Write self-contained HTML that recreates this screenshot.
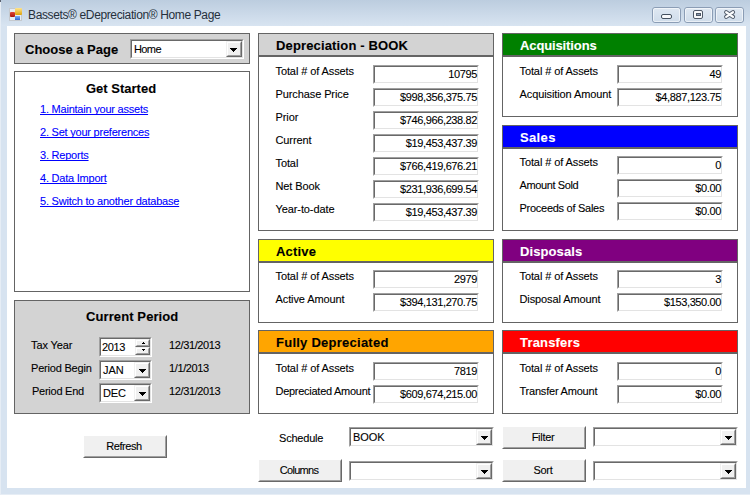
<!DOCTYPE html>
<html><head><meta charset="utf-8"><style>
*{margin:0;padding:0;box-sizing:border-box}
html,body{width:750px;height:495px;overflow:hidden;background:#d7e3f0}
body{position:relative;font-family:"Liberation Sans",sans-serif;font-size:11px;color:#000}
.a{position:absolute}
.t{position:absolute;white-space:nowrap;font-size:11px;line-height:13px;letter-spacing:-0.1px;-webkit-text-stroke:0.1px currentColor}
.n{letter-spacing:-0.38px}
.b{font-weight:bold;font-size:13px;line-height:15px;letter-spacing:0}
.p{position:absolute;border:1px solid #646464}
.sk{position:absolute;border:1px solid;border-color:#a0a0a0 #fff #fff #a0a0a0}
.sk>i{position:absolute;left:0;top:0;right:0;bottom:0;border:1px solid;border-color:#696969 #e3e3e3 #e3e3e3 #696969;background:#fff}
.btn{position:absolute;border:1px solid;border-color:#fff #696969 #696969 #fff;background:#f0f0f0}
.btn>i{position:absolute;left:0;top:0;right:0;bottom:0;border:1px solid;border-color:#f0f0f0 #a0a0a0 #a0a0a0 #f0f0f0}
.dd{position:absolute;border:1px solid;border-color:#f0f0f0 #696969 #696969 #f0f0f0;background:#f0f0f0}
.dd>i{position:absolute;left:0;top:0;right:0;bottom:0;border:1px solid;border-color:#fff #a0a0a0 #a0a0a0 #fff}
svg{position:absolute;shape-rendering:crispEdges}
.lnk{color:#0000ff;text-decoration:underline;text-decoration-skip-ink:none;letter-spacing:-0.22px}
.wb{position:absolute;top:7px;width:29px;height:16px;border:1px solid #8b9db5;border-radius:3px;background:linear-gradient(#dfe8f2,#cfdcea)}
.wb>i{position:absolute;left:0;top:0;right:0;bottom:0;border:1px solid rgba(255,255,255,0.55);border-radius:2px}
</style></head>
<body>
<div class="a" style="left:0;top:0;width:750px;height:26px;background:linear-gradient(#bccddf,#d8e4f1)"></div>
<div class="a" style="left:0;top:0;width:1px;height:495px;background:#e6edf5"></div>
<div class="a" style="left:0;top:494px;width:750px;height:1px;background:#e6edf5"></div>
<div class="a" style="left:0;top:0;width:1px;height:2px;background:#5a6270"></div>
<div class="a" style="left:7px;top:26px;width:739px;height:462px;background:#fff"></div>
<div class="a" style="left:9px;top:8px;width:13px;height:13px;border:1px solid #c5c9ce;background:#e6edf4"></div>
<div class="a" style="left:10px;top:12px;width:5px;height:5px;background:linear-gradient(#e0483a,#a8140c);border-radius:1px"></div>
<div class="a" style="left:15px;top:8px;width:7px;height:7px;background:linear-gradient(#ffe690,#dea20a);border-radius:1px"></div>
<div class="a" style="left:15px;top:16px;width:5px;height:4px;background:linear-gradient(#7fb0f5,#2f68d8)"></div>
<div class="t" style="left:28px;top:8px;font-size:12px;line-height:14px;color:#26303c;letter-spacing:-0.37px;-webkit-text-stroke:0">Bassets® eDepreciation® Home Page</div>
<div class="wb" style="left:652px"><i></i></div>
<div class="wb" style="left:684px"><i></i></div>
<div class="wb" style="left:715px"><i></i></div>
<div class="a" style="left:661px;top:14px;width:11px;height:5px;border:1px solid #44505f;background:#f8f9fb;border-radius:2px"></div>
<div class="a" style="left:693px;top:10px;width:10px;height:9px;border:1px solid #4f5968;background:#f8f9fb;border-radius:2px"></div>
<div class="a" style="left:696px;top:13px;width:5px;height:3px;border:1px solid #4f5968;background:#8a9ab0"></div>
<svg width="16" height="14" style="left:722px;top:8px;shape-rendering:auto"><path d="M4.20 4.25L11.00 8.85M11.00 4.25L4.20 8.85" stroke="#4f5968" stroke-width="4.2" stroke-linecap="round"/><path d="M4.20 4.25L11.00 8.85M11.00 4.25L4.20 8.85" stroke="#fbfcfd" stroke-width="2.3" stroke-linecap="round"/></svg>
<div class="p" style="left:14px;top:33px;width:236px;height:31px;background:#d3d3d3"></div>
<div class="t b" style="left:25px;top:42px;">Choose a Page</div>
<div class="sk" style="left:130px;top:39px;width:114px;height:20px"><i></i><div class="t" style="left:3px;top:3px"><span style='letter-spacing:-0.6px'>Home</span></div><div class="dd" style="left:95px;top:1px;width:16px;height:16px"><i></i><svg width="7" height="4" style="left:3px;top:6px"><path d="M0 0H7V1H6V2H5V3H4V4H3V3H2V2H1V1H0Z" fill="#000"/></svg></div></div>
<div class="p" style="left:14px;top:71px;width:236px;height:221px;background:#fff"></div>
<div class="t b" style="left:86px;top:81px;">Get Started</div>
<div class="t lnk" style="left:40px;top:103px;">1. Maintain your assets</div>
<div class="t lnk" style="left:40px;top:126px;">2. Set your preferences</div>
<div class="t lnk" style="left:40px;top:149px;">3. Reports</div>
<div class="t lnk" style="left:40px;top:172px;">4. Data Import</div>
<div class="t lnk" style="left:40px;top:195px;">5. Switch to another database</div>
<div class="p" style="left:14px;top:300px;width:236px;height:114px;background:#d3d3d3"></div>
<div class="t b" style="left:86px;top:309px;letter-spacing:0.1px">Current Period</div>
<div class="t" style="left:31px;top:339px;">Tax Year</div>
<div class="t" style="left:31px;top:362px;letter-spacing:-0.2px">Period Begin</div>
<div class="t" style="left:32px;top:385px;letter-spacing:-0.25px">Period End</div>
<div class="sk" style="left:99px;top:337px;width:53px;height:20px"><i></i><div class="t n" style="left:2px;top:3px">2013</div><div class="dd" style="left:35px;top:1px;width:15px;height:8px"><i></i><svg width="3" height="2" style="left:6px;top:2px"><path d="M1 0H2V1H3V2H0V1H1Z" fill="#000"/></svg></div><div class="dd" style="left:35px;top:9px;width:15px;height:8px"><i></i><svg width="3" height="2" style="left:6px;top:1px"><path d="M0 0H3V1H2V2H1V1H0Z" fill="#000"/></svg></div></div>
<div class="sk" style="left:99px;top:360px;width:53px;height:20px"><i></i><div class="t" style="left:3px;top:3px">JAN</div><div class="dd" style="left:34px;top:1px;width:16px;height:16px"><i></i><svg width="7" height="4" style="left:4px;top:6px"><path d="M0 0H7V1H6V2H5V3H4V4H3V3H2V2H1V1H0Z" fill="#000"/></svg></div></div>
<div class="sk" style="left:99px;top:383px;width:53px;height:20px"><i></i><div class="t" style="left:3px;top:3px">DEC</div><div class="dd" style="left:34px;top:1px;width:16px;height:16px"><i></i><svg width="7" height="4" style="left:4px;top:6px"><path d="M0 0H7V1H6V2H5V3H4V4H3V3H2V2H1V1H0Z" fill="#000"/></svg></div></div>
<div class="t n" style="left:169px;top:339px;">12/31/2013</div>
<div class="t n" style="left:169px;top:362px;">1/1/2013</div>
<div class="t n" style="left:169px;top:385px;">12/31/2013</div>
<div class="btn" style="left:83px;top:435px;width:84px;height:23px"><i></i><div class="t" style="left:0;right:2px;top:4px;text-align:center;letter-spacing:-0.45px">Refresh</div></div>
<div class="p" style="left:258px;top:33px;width:236px;height:198px;background:#fff"></div>
<div class="a" style="left:259px;top:34px;width:234px;height:21px;background:#d3d3d3"></div>
<div class="a" style="left:259px;top:55px;width:234px;height:2px;background:#646464"></div>
<div class="t b" style="left:276px;top:38px;color:#000;letter-spacing:0.15px">Depreciation - BOOK</div>
<div class="t" style="left:275.5px;top:65px;">Total # of Assets</div>
<div class="sk" style="left:373px;top:65px;width:106px;height:19px"><i></i><div class="t n" style="right:1px;top:2px">10795</div></div>
<div class="t" style="left:275.5px;top:88px;">Purchase Price</div>
<div class="sk" style="left:373px;top:88px;width:106px;height:19px"><i></i><div class="t n" style="right:1px;top:2px">$998,356,375.75</div></div>
<div class="t" style="left:275.5px;top:111px;">Prior</div>
<div class="sk" style="left:373px;top:111px;width:106px;height:19px"><i></i><div class="t n" style="right:1px;top:2px">$746,966,238.82</div></div>
<div class="t" style="left:275.5px;top:134px;">Current</div>
<div class="sk" style="left:373px;top:134px;width:106px;height:19px"><i></i><div class="t n" style="right:1px;top:2px">$19,453,437.39</div></div>
<div class="t" style="left:275.5px;top:157px;">Total</div>
<div class="sk" style="left:373px;top:157px;width:106px;height:19px"><i></i><div class="t n" style="right:1px;top:2px">$766,419,676.21</div></div>
<div class="t" style="left:275.5px;top:180px;">Net Book</div>
<div class="sk" style="left:373px;top:180px;width:106px;height:19px"><i></i><div class="t n" style="right:1px;top:2px">$231,936,699.54</div></div>
<div class="t" style="left:275.5px;top:203px;">Year-to-date</div>
<div class="sk" style="left:373px;top:203px;width:106px;height:19px"><i></i><div class="t n" style="right:1px;top:2px">$19,453,437.39</div></div>
<div class="p" style="left:258px;top:239px;width:236px;height:84px;background:#fff"></div>
<div class="a" style="left:259px;top:240px;width:234px;height:21px;background:#ffff00"></div>
<div class="a" style="left:259px;top:261px;width:234px;height:2px;background:#646464"></div>
<div class="t b" style="left:276px;top:244px;color:#000;letter-spacing:0.2px">Active</div>
<div class="t" style="left:275.5px;top:270px;">Total # of Assets</div>
<div class="sk" style="left:373px;top:270px;width:106px;height:19px"><i></i><div class="t n" style="right:1px;top:2px">2979</div></div>
<div class="t" style="left:275.5px;top:293px;">Active Amount</div>
<div class="sk" style="left:373px;top:293px;width:106px;height:19px"><i></i><div class="t n" style="right:1px;top:2px">$394,131,270.75</div></div>
<div class="p" style="left:258px;top:330px;width:236px;height:84px;background:#fff"></div>
<div class="a" style="left:259px;top:331px;width:234px;height:21px;background:#ffa500"></div>
<div class="a" style="left:259px;top:352px;width:234px;height:2px;background:#646464"></div>
<div class="t b" style="left:276px;top:335px;color:#000;letter-spacing:0.25px">Fully Depreciated</div>
<div class="t" style="left:275.5px;top:362px;">Total # of Assets</div>
<div class="sk" style="left:373px;top:362px;width:106px;height:19px"><i></i><div class="t n" style="right:1px;top:2px">7819</div></div>
<div class="t" style="left:275.5px;top:385px;letter-spacing:-0.27px">Depreciated Amount</div>
<div class="sk" style="left:373px;top:385px;width:106px;height:19px"><i></i><div class="t n" style="right:1px;top:2px">$609,674,215.00</div></div>
<div class="p" style="left:502px;top:33px;width:236px;height:84px;background:#fff"></div>
<div class="a" style="left:503px;top:34px;width:234px;height:21px;background:#008000"></div>
<div class="a" style="left:503px;top:55px;width:234px;height:2px;background:#646464"></div>
<div class="t b" style="left:520px;top:38px;color:#fff;letter-spacing:-0.12px">Acquisitions</div>
<div class="t" style="left:519.5px;top:65px;">Total # of Assets</div>
<div class="sk" style="left:617px;top:65px;width:106px;height:19px"><i></i><div class="t n" style="right:1px;top:2px">49</div></div>
<div class="t" style="left:519.5px;top:88px;">Acquisition Amount</div>
<div class="sk" style="left:617px;top:88px;width:106px;height:19px"><i></i><div class="t n" style="right:1px;top:2px">$4,887,123.75</div></div>
<div class="p" style="left:502px;top:125px;width:236px;height:106px;background:#fff"></div>
<div class="a" style="left:503px;top:126px;width:234px;height:21px;background:#0000ff"></div>
<div class="a" style="left:503px;top:147px;width:234px;height:2px;background:#646464"></div>
<div class="t b" style="left:520px;top:130px;color:#fff;letter-spacing:0.35px">Sales</div>
<div class="t" style="left:519.5px;top:156px;">Total # of Assets</div>
<div class="sk" style="left:617px;top:156px;width:106px;height:19px"><i></i><div class="t n" style="right:1px;top:2px">0</div></div>
<div class="t" style="left:519.5px;top:179px;letter-spacing:-0.38px">Amount Sold</div>
<div class="sk" style="left:617px;top:179px;width:106px;height:19px"><i></i><div class="t n" style="right:1px;top:2px">$0.00</div></div>
<div class="t" style="left:519.5px;top:202px;letter-spacing:-0.27px">Proceeds of Sales</div>
<div class="sk" style="left:617px;top:202px;width:106px;height:19px"><i></i><div class="t n" style="right:1px;top:2px">$0.00</div></div>
<div class="p" style="left:502px;top:239px;width:236px;height:84px;background:#fff"></div>
<div class="a" style="left:503px;top:240px;width:234px;height:21px;background:#800080"></div>
<div class="a" style="left:503px;top:261px;width:234px;height:2px;background:#646464"></div>
<div class="t b" style="left:520px;top:244px;color:#fff;letter-spacing:0.1px">Disposals</div>
<div class="t" style="left:519.5px;top:270px;">Total # of Assets</div>
<div class="sk" style="left:617px;top:270px;width:106px;height:19px"><i></i><div class="t n" style="right:1px;top:2px">3</div></div>
<div class="t" style="left:519.5px;top:293px;">Disposal Amount</div>
<div class="sk" style="left:617px;top:293px;width:106px;height:19px"><i></i><div class="t n" style="right:1px;top:2px">$153,350.00</div></div>
<div class="p" style="left:502px;top:330px;width:236px;height:84px;background:#fff"></div>
<div class="a" style="left:503px;top:331px;width:234px;height:21px;background:#ff0000"></div>
<div class="a" style="left:503px;top:352px;width:234px;height:2px;background:#646464"></div>
<div class="t b" style="left:520px;top:335px;color:#fff;letter-spacing:0.18px">Transfers</div>
<div class="t" style="left:519.5px;top:362px;">Total # of Assets</div>
<div class="sk" style="left:617px;top:362px;width:106px;height:19px"><i></i><div class="t n" style="right:1px;top:2px">0</div></div>
<div class="t" style="left:519.5px;top:385px;letter-spacing:-0.21px">Transfer Amount</div>
<div class="sk" style="left:617px;top:385px;width:106px;height:19px"><i></i><div class="t n" style="right:1px;top:2px">$0.00</div></div>
<div class="t" style="left:279px;top:432px;letter-spacing:-0.2px">Schedule</div>
<div class="sk" style="left:349px;top:427px;width:145px;height:20px"><i></i><div class="t" style="left:3px;top:3px">BOOK</div><div class="dd" style="left:126px;top:1px;width:16px;height:16px"><i></i><svg width="7" height="4" style="left:4px;top:6px"><path d="M0 0H7V1H6V2H5V3H4V4H3V3H2V2H1V1H0Z" fill="#000"/></svg></div></div>
<div class="btn" style="left:258px;top:459px;width:84px;height:23px"><i></i><div class="t" style="left:0;right:2px;top:4px;text-align:center;letter-spacing:-0.7px">Columns</div></div>
<div class="sk" style="left:349px;top:461px;width:145px;height:20px"><i></i><div class="dd" style="left:126px;top:1px;width:16px;height:16px"><i></i><svg width="7" height="4" style="left:4px;top:6px"><path d="M0 0H7V1H6V2H5V3H4V4H3V3H2V2H1V1H0Z" fill="#000"/></svg></div></div>
<div class="btn" style="left:502px;top:426px;width:84px;height:23px"><i></i><div class="t" style="left:0;right:2px;top:4px;text-align:center;letter-spacing:-0.3px">Filter</div></div>
<div class="sk" style="left:593px;top:427px;width:145px;height:20px"><i></i><div class="dd" style="left:126px;top:1px;width:16px;height:16px"><i></i><svg width="7" height="4" style="left:4px;top:6px"><path d="M0 0H7V1H6V2H5V3H4V4H3V3H2V2H1V1H0Z" fill="#000"/></svg></div></div>
<div class="btn" style="left:502px;top:459px;width:84px;height:23px"><i></i><div class="t" style="left:0;right:2px;top:4px;text-align:center;letter-spacing:-0.3px">Sort</div></div>
<div class="sk" style="left:593px;top:461px;width:145px;height:20px"><i></i><div class="dd" style="left:126px;top:1px;width:16px;height:16px"><i></i><svg width="7" height="4" style="left:4px;top:6px"><path d="M0 0H7V1H6V2H5V3H4V4H3V3H2V2H1V1H0Z" fill="#000"/></svg></div></div>
</body></html>
